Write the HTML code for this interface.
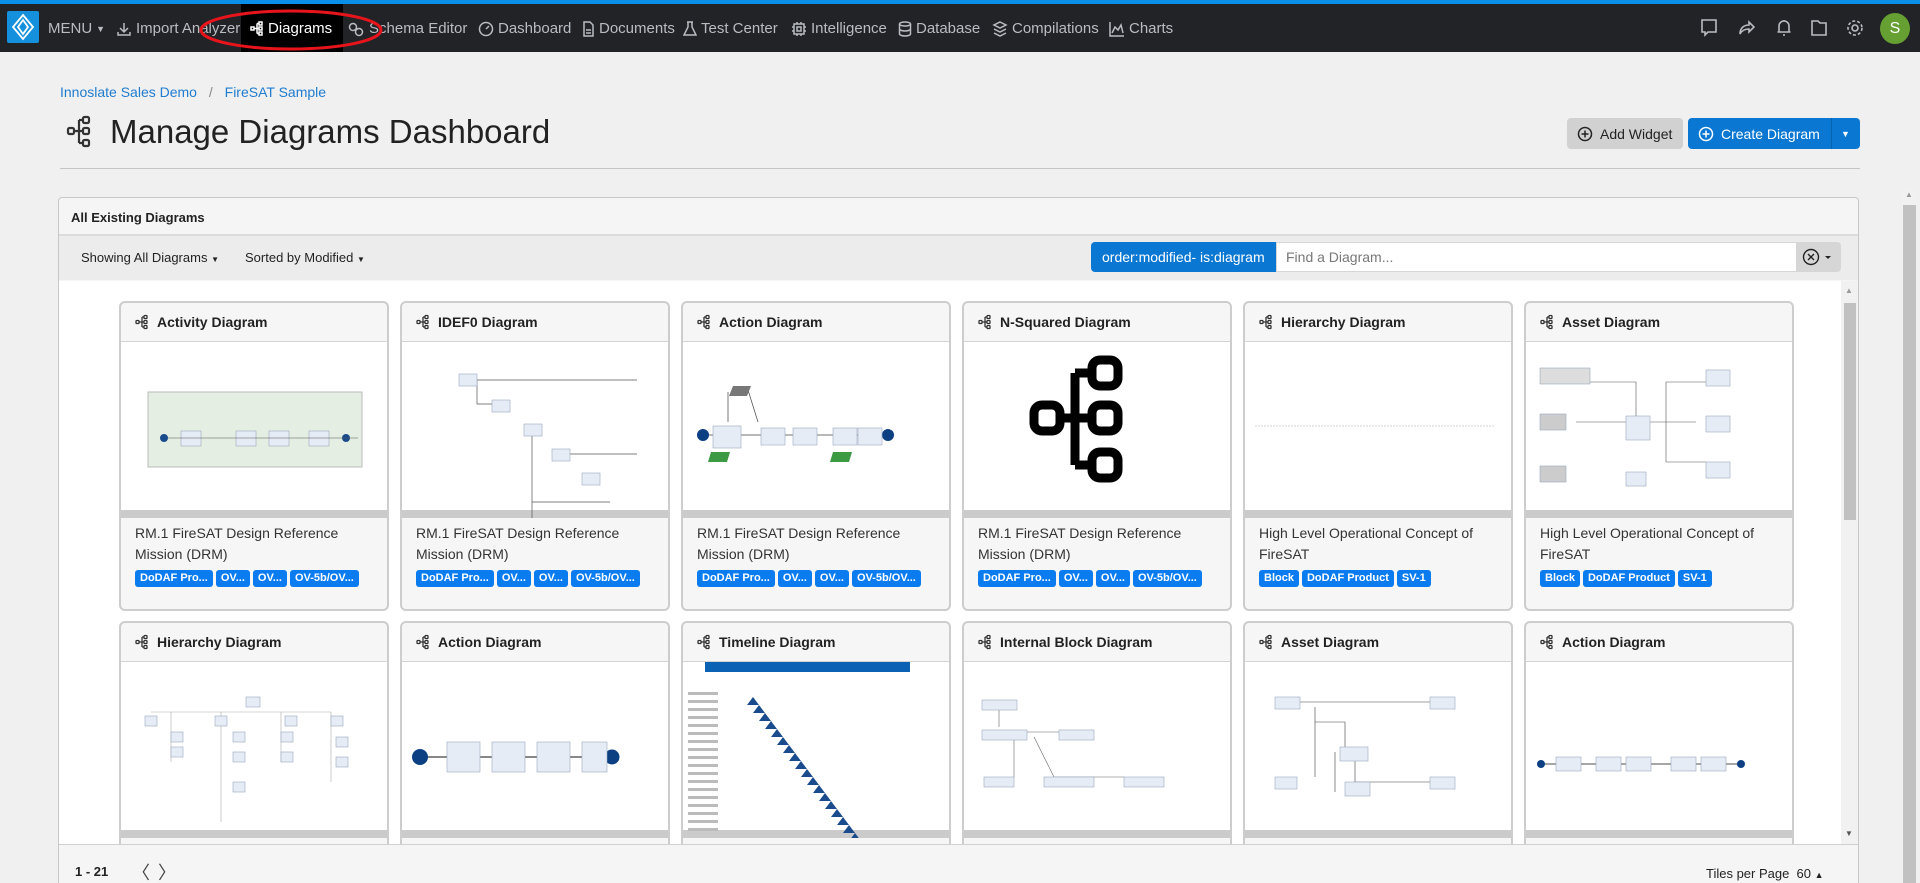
<!DOCTYPE html>
<html><head><meta charset="utf-8"><style>
*{box-sizing:border-box;margin:0;padding:0}
html,body{width:1920px;height:883px;overflow:hidden}
body{background:#f0f0f0;font-family:"Liberation Sans",sans-serif;position:relative;color:#222}
.top{position:absolute;left:0;top:0;width:1920px;height:4px;background:#0a8fe8}
.nav{position:absolute;left:0;top:4px;width:1920px;height:48px;background:#212327}
.ni{position:absolute;top:16px;color:#b9bcc1;font-size:15px;white-space:nowrap;display:flex;align-items:center;gap:4px}
.ni svg{stroke:#b9bcc1;fill:none;stroke-width:1.5}
.abs{position:absolute}
.ic svg{stroke:#b9bcc1;fill:none;stroke-width:1.6}
.card{position:absolute;width:270px;height:310px;border:2px solid #cdcdcd;border-radius:6px;background:#f6f6f6;overflow:hidden}
.ch{height:39px;border-bottom:1px solid #d4d4d4;display:flex;align-items:center;padding-left:14px;font-weight:bold;font-size:14px;color:#222;gap:9px}
.img{height:176px;background:#fff;border-bottom:8px solid #cbcbcb;position:relative}
.ct{padding:5px 14px 0 14px;font-size:14px;line-height:21px;color:#333;height:52px}
.tags{padding-left:14px;display:flex;gap:3px}
.tag{background:#0a7cf0;color:#fff;font-weight:bold;font-size:11px;height:17px;line-height:17px;padding:0 5px;border-radius:3px;white-space:nowrap}
</style></head><body>
<div class="top"></div>
<div class="nav">
 <div class="abs" style="left:7px;top:7px;width:32px;height:32px;background:#1590dc;border-radius:2px"><svg width="32" height="32"><path d="M16 4 L26 16 L16 28 L6 16Z M16 9 L21 16 L16 23 L11 16Z" fill="none" stroke="#fff" stroke-width="1.8"/></svg></div>
 <div class="ni" style="left:48px">MENU <span style="font-size:9px">▼</span></div>
 <div class="ni" style="left:116px"><svg width="16" height="16"><path d="M8 2v9M4 7l4 4 4-4M2 11v3h12v-3"/></svg>Import Analyzer</div>
 <div class="abs" style="left:241px;top:0;width:102px;height:48px;background:#000"></div>
 <div class="ni" style="left:250px;color:#fff"><svg width="14" height="16" style="stroke:#fff"><rect x="1" y="6" width="3" height="3"/><rect x="9" y="1" width="3" height="3"/><rect x="9" y="6" width="3" height="3"/><rect x="9" y="11" width="3" height="3"/><path d="M4 7.5h5M7 2.5v10M7 2.5h2M7 12.5h2"/></svg>Diagrams</div>
 <div class="ni" style="left:347px"><svg width="18" height="16"><circle cx="6" cy="6" r="3.5"/><circle cx="12" cy="11" r="3.5"/></svg>Schema Editor</div>
 <div class="ni" style="left:478px"><svg width="16" height="16"><circle cx="8" cy="8" r="6.5"/><path d="M8 8l3-3"/></svg>Dashboard</div>
 <div class="ni" style="left:582px"><svg width="13" height="16"><path d="M2 1h6l3 3v11H2z M4 9h5M4 12h5"/></svg>Documents</div>
 <div class="ni" style="left:683px"><svg width="14" height="16"><path d="M5 1v5L1 14h12L9 6V1M4 1h6"/></svg>Test Center</div>
 <div class="ni" style="left:791px"><svg width="16" height="16"><rect x="3" y="3" width="10" height="10"/><rect x="6" y="6" width="4" height="4"/><path d="M1 6h2M1 10h2M13 6h2M13 10h2M6 1v2M10 1v2M6 13v2M10 13v2"/></svg>Intelligence</div>
 <div class="ni" style="left:898px"><svg width="14" height="16"><ellipse cx="7" cy="3" rx="5.5" ry="2"/><path d="M1.5 3v10c0 1 2.5 2 5.5 2s5.5-1 5.5-2V3M1.5 8c0 1 2.5 2 5.5 2s5.5-1 5.5-2"/></svg>Database</div>
 <div class="ni" style="left:992px"><svg width="16" height="16"><path d="M8 1l6 3-6 3-6-3z M2 8l6 3 6-3M2 12l6 3 6-3"/></svg>Compilations</div>
 <div class="ni" style="left:1109px"><svg width="16" height="16"><path d="M1 1v14h14M3 12l3-6 3 3 3-5 2 8"/></svg>Charts</div>
 <div class="abs ic" style="left:1700px;top:14px"><svg width="18" height="20"><path d="M2 2h14v12H8l-3 3v-3H2z"/></svg></div>
 <div class="abs ic" style="left:1737px;top:14px"><svg width="18" height="20"><path d="M3 16c0-6 4-9 9-9V4l5 5-5 5v-3c-4 0-7 1-9 5z"/></svg></div>
 <div class="abs ic" style="left:1775px;top:14px"><svg width="18" height="20"><path d="M4 14V8a5 5 0 0 1 10 0v6h1.5H2.5zM8 17h2M9 2v1"/></svg></div>
 <div class="abs ic" style="left:1810px;top:14px"><svg width="18" height="20"><path d="M2 3h6l2 2h6v12H2z"/></svg></div>
 <div class="abs ic" style="left:1846px;top:14px"><svg width="18" height="20"><circle cx="9" cy="10" r="3"/><circle cx="9" cy="10" r="7" stroke-dasharray="3 2"/></svg></div>
 <div class="abs" style="left:1880px;top:9px;width:30px;height:31px;border-radius:50%;background:#66a032;color:#fff;font-size:16px;text-align:center;line-height:31px">S</div>
</div>
<svg class="abs" style="left:195px;top:6px" width="192" height="48"><ellipse cx="96" cy="24" rx="90" ry="19" fill="none" stroke="#e8141c" stroke-width="3"/></svg>

<div class="abs" style="left:60px;top:84px;font-size:14px;color:#1f7ccf">Innoslate Sales Demo <span style="color:#888;margin:0 8px">/</span> FireSAT Sample</div>
<svg class="abs" style="left:66px;top:115px" width="28" height="34" fill="none" stroke="#333" stroke-width="2.2"><rect x="2" y="13" width="6" height="6" rx="1.5"/><rect x="17" y="2" width="6" height="6" rx="1.5"/><rect x="17" y="13" width="6" height="6" rx="1.5"/><rect x="17" y="25" width="6" height="6" rx="1.5"/><path d="M8 16h9M13 5v23M13 5h4M13 28h4"/></svg>
<div class="abs" style="left:110px;top:113px;font-size:33px;color:#222">Manage Diagrams Dashboard</div>
<div class="abs" style="left:60px;top:168px;width:1800px;height:1px;background:#c4c4c4"></div>
<div class="abs" style="left:1567px;top:118px;width:116px;height:31px;background:#d1d1d1;border-radius:4px;font-size:14px;color:#222;display:flex;align-items:center;padding-left:10px;gap:7px"><svg width="16" height="16" fill="none" stroke="#222" stroke-width="1.5"><circle cx="8" cy="8" r="6.5"/><path d="M8 4.5v7M4.5 8h7"/></svg>Add Widget</div>
<div class="abs" style="left:1688px;top:118px;width:172px;height:31px;background:#0a78d2;border-radius:4px;font-size:14px;color:#fff;display:flex;align-items:center;padding-left:10px;gap:7px"><svg width="16" height="16" fill="none" stroke="#fff" stroke-width="1.5"><circle cx="8" cy="8" r="6.5"/><path d="M8 4.5v7M4.5 8h7"/></svg>Create Diagram<div style="position:absolute;left:143px;top:0;width:1px;height:31px;background:#0564b2"></div><span style="position:absolute;left:153px;font-size:9px">▼</span></div>

<div class="abs" style="left:58px;top:197px;width:1801px;height:690px;border:1px solid #c8c8c8;border-radius:4px;background:#f5f5f5;overflow:hidden">
 <div style="height:38px;border-bottom:2px solid #dcdcdc;font-weight:bold;font-size:13px;padding:12px 0 0 12px">All Existing Diagrams</div>
 <div style="height:44px;background:#ececec;position:relative;font-size:13px">
  <div class="abs" style="left:22px;top:14px">Showing All Diagrams <span style="font-size:8px">▼</span></div>
  <div class="abs" style="left:186px;top:14px">Sorted by Modified <span style="font-size:8px">▼</span></div>
  <div class="abs" style="left:1032px;top:6px;width:185px;height:30px;background:#0a78d2;color:#fff;border-radius:4px 0 0 4px;font-size:14px;line-height:30px;padding-left:11px">order:modified- is:diagram</div>
  <div class="abs" style="left:1217px;top:6px;width:521px;height:30px;background:#fff;border:1px solid #d6d6d6;color:#777;font-size:14px;line-height:28px;padding-left:9px">Find a Diagram...</div>
  <div class="abs" style="left:1738px;top:6px;width:44px;height:30px;background:#d6d6d6;border-radius:0 4px 4px 0"><svg width="44" height="30" fill="none" stroke="#222" stroke-width="1.4"><circle cx="14" cy="15" r="7.5"/><path d="M11 12l6 6M17 12l-6 6"/><path d="M28 14h6l-3 3z" fill="#222" stroke="none"/></svg></div>
 </div>
 <div style="position:absolute;left:0;top:83px;width:1799px;height:563px;background:#fff;overflow:hidden" id="grid">
  <div class="abs" style="left:1782px;top:0;width:17px;height:563px;background:#f1f1f1"></div>
  <div class="abs" style="left:1785px;top:22px;width:12px;height:217px;background:#c1c1c1"></div>
  <div class="abs" style="left:1786px;top:5px;font-size:8px;color:#999">▲</div>
  <div class="abs" style="left:1786px;top:548px;font-size:8px;color:#555">▼</div>
 </div>
 <div style="position:absolute;left:0;top:646px;width:1799px;height:44px;border-top:1px solid #d0d0d0;font-size:13px">
  <div class="abs" style="left:16px;top:19px;font-weight:bold;color:#222">1 - 21</div>
  <div class="abs" style="left:73px;top:14px;font-size:18px;color:#444">〈</div>
  <div class="abs" style="left:99px;top:14px;font-size:18px;color:#444">〉</div>
  <div class="abs" style="left:1647px;top:21px;color:#222">Tiles per Page &nbsp;60 <span style="font-size:9px">▲</span></div>
 </div>
</div>
<div class="abs" style="left:1902px;top:190px;width:15px;height:693px;background:#f1f1f1"></div>
<div class="abs" style="left:1903px;top:205px;width:13px;height:678px;background:#c1c1c1"></div>
<div class="abs" style="left:1905px;top:190px;font-size:8px;color:#999">▲</div>

<script>
const I='<svg width="13" height="16" fill="none" stroke="#333" stroke-width="1.3"><rect x="1" y="6.5" width="3" height="3" rx=".8"/><rect x="9" y="1.5" width="3" height="3" rx=".8"/><rect x="9" y="6.5" width="3" height="3" rx=".8"/><rect x="9" y="11.5" width="3" height="3" rx=".8"/><path d="M4 8h5M7 3v10M7 3h2M7 13h2"/></svg>';
const box=(x,y,w,h,c)=>`<rect x="${x}" y="${y}" width="${w}" height="${h}" fill="${c||'#e6ecf5'}" stroke="#9aa8bd" stroke-width=".6"/>`;
const T={
act:`<svg width="266" height="176"><rect x="27" y="50" width="214" height="75" fill="#e5eee2" stroke="#bbb"/><circle cx="43" cy="96" r="4" fill="#1a4b8c"/><circle cx="225" cy="96" r="4" fill="#1a4b8c"/>${box(60,89,20,15)}${box(115,89,20,15)}${box(148,89,20,15)}${box(188,89,20,15)}<path d="M47 96h190" stroke="#555" stroke-width=".6"/></svg>`,
idef:`<svg width="266" height="176"><path d="M75 38h160M75 38v24h15M130 88v138M130 160h78M155 112h80" stroke="#555" stroke-width=".7" fill="none"/>${box(57,32,18,12)}${box(90,58,18,12)}${box(122,82,18,12)}${box(150,107,18,12)}${box(180,131,18,12)}</svg>`,
action:`<svg width="266" height="176"><path d="M20 93h190M45 80V50M75 80L65 48" stroke="#444" stroke-width=".7"/><polygon points="50,44 68,44 64,54 46,54" fill="#777"/><circle cx="20" cy="93" r="6" fill="#0d3f83"/><circle cx="205" cy="93" r="6" fill="#0d3f83"/>${box(30,84,28,22)}${box(78,86,24,17)}${box(110,86,24,17)}${box(150,86,24,17)}${box(175,86,24,17)}<polygon points="28,110 47,110 44,120 25,120" fill="#3c9a43"/><polygon points="150,110 169,110 166,120 147,120" fill="#3c9a43"/></svg>`,
nsq:`<svg width="266" height="176"><g fill="none" stroke="#000" stroke-width="9"><rect x="70" y="63" width="26" height="26" rx="8"/><rect x="128" y="18" width="26" height="26" rx="8"/><rect x="128" y="63" width="26" height="26" rx="8"/><rect x="128" y="110" width="26" height="26" rx="8"/><path d="M96 76h32M111 31v92M111 31h17M111 123h17"/></g></svg>`,
hier:`<svg width="266" height="176"><path d="M10 84h240" stroke="#aaa" stroke-width=".6" stroke-dasharray="2 1"/></svg>`,
asset:`<svg width="266" height="176"><path d="M50 40h60v40h40M110 80h60M140 80V40h40M140 80v40h40M50 80h60" stroke="#555" stroke-width=".6" fill="none"/>${box(14,26,50,16,'#ddd')}${box(14,72,26,16,'#ccc')}${box(14,124,26,16,'#ccc')}${box(100,74,24,24)}${box(100,130,20,14)}${box(180,28,24,16)}${box(180,74,24,16)}${box(180,120,24,16)}</svg>`,
hier2:`<svg width="266" height="176"><g stroke="#aaa" stroke-width=".6" fill="none"><path d="M30 50h180M50 50v50M100 50v110M160 50v50M210 50v70"/></g>${box(125,35,14,10)}${box(24,54,12,10)}${box(94,54,12,10)}${box(164,54,12,10)}${box(210,54,12,10)}${box(50,70,12,10)}${box(50,85,12,10)}${box(112,70,12,10)}${box(112,90,12,10)}${box(112,120,12,10)}${box(160,70,12,10)}${box(160,90,12,10)}${box(215,75,12,10)}${box(215,95,12,10)}</svg>`,
act2:`<svg width="266" height="176"><path d="M20 95h190" stroke="#111"/><circle cx="18" cy="95" r="8" fill="#0d3f83"/><circle cx="210" cy="95" r="8" fill="#0d3f83" stroke="#fff"/>${box(45,80,33,30)}${box(90,80,33,30)}${box(135,80,33,30)}${box(180,80,25,30)}</svg>`,
time:`<svg width="266" height="176"><rect x="22" y="0" width="205" height="10" fill="#0b62b5"/><g fill="#1a4b8c">${[...Array(18).keys()].map(i=>`<polygon points="${70+i*6},${35+i*8} ${76+i*6},${43+i*8} ${64+i*6},${43+i*8}"/>`).join('')}</g>${[...Array(18).keys()].map(i=>`<rect x="5" y="${30+i*8}" width="30" height="3" fill="#bbb"/>`).join('')}</svg>`,
ibd:`<svg width="266" height="176"><g stroke="#666" stroke-width=".6" fill="none"><path d="M35 45v20M35 70h60M50 75v40M70 75l20 40h70"/></g>${box(18,38,35,10)}${box(18,68,45,10)}${box(95,68,35,10)}${box(20,115,30,10)}${box(80,115,50,10)}${box(160,115,40,10)}</svg>`,
asset2:`<svg width="266" height="176"><g stroke="#444" stroke-width=".6" fill="none"><path d="M45 40h165M70 45v70M90 90v40M70 60h30v30M110 90v30h80"/></g>${box(30,35,25,12)}${box(185,35,25,12)}${box(95,85,28,14)}${box(30,115,22,12)}${box(100,120,25,14)}${box(185,115,25,12)}</svg>`,
act3:`<svg width="266" height="176"><path d="M15 102h200" stroke="#111" stroke-width=".7"/><circle cx="15" cy="102" r="4" fill="#0d3f83"/><circle cx="215" cy="102" r="4" fill="#0d3f83"/>${box(30,95,25,14)}${box(70,95,25,14)}${box(100,95,25,14)}${box(145,95,25,14)}${box(175,95,25,14)}</svg>`
};
const tagsA=['DoDAF Pro...','OV...','OV...','OV-5b/OV...'], tagsB=['Block','DoDAF Product','SV-1'];
const cards=[
['Activity Diagram','act',1],['IDEF0 Diagram','idef',1],['Action Diagram','action',1],['N-Squared Diagram','nsq',1],['Hierarchy Diagram','hier',2],['Asset Diagram','asset',2],
['Hierarchy Diagram','hier2',1],['Action Diagram','act2',1],['Timeline Diagram','time',1],['Internal Block Diagram','ibd',1],['Asset Diagram','asset2',1],['Action Diagram','act3',1]];
let h='';
cards.forEach((c,i)=>{const x=60+(i%6)*281, y=(i<6?20:340);
const title=c[2]==1?'RM.1 FireSAT Design Reference Mission (DRM)':'High Level Operational Concept of FireSAT';
const tg=(c[2]==1?tagsA:tagsB).map(t=>`<span class="tag">${t}</span>`).join('');
h+=`<div class="card" style="left:${x}px;top:${y}px"><div class="ch">${I}${c[0]}</div><div class="img">${T[c[1]]}</div><div class="ct">${title}</div><div class="tags">${tg}</div></div>`;});
document.getElementById('grid').insertAdjacentHTML('afterbegin',h);
</script>
</body></html>
